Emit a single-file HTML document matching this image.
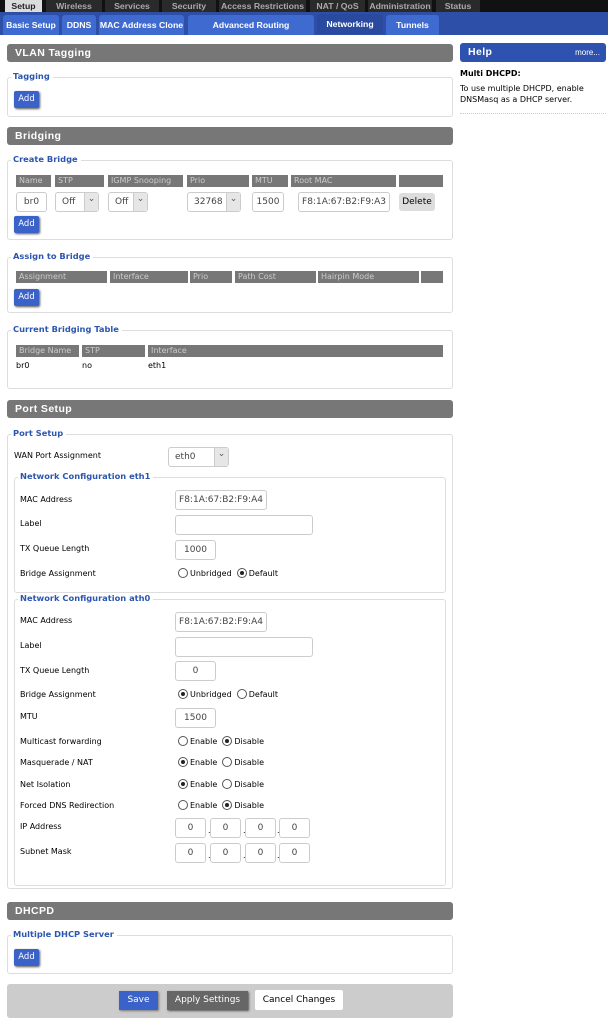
<!DOCTYPE html>
<html><head><meta charset="utf-8"><style>
*{box-sizing:border-box;margin:0;padding:0}
body{width:608px;height:1024px;background:#fff;position:relative;overflow:hidden;font-family:"DejaVu Sans","Liberation Sans",sans-serif;font-size:8px;color:#000}
.a{position:absolute}
.top{left:0;top:0;width:608px;height:12px;background:#111}
.t1{top:0;height:12px;background:#2a2a2a;color:#aaa;font-size:8.7px;font-weight:bold;text-align:center;line-height:12px;font-family:"Liberation Sans",sans-serif;overflow:hidden;white-space:nowrap}
.bar2{left:0;top:12px;width:608px;height:23px;background:#2e4fa8}
.t2{top:15px;height:20px;background:#3f6ad0;color:#fff;font-size:8.7px;font-weight:bold;text-align:center;line-height:21px;border-radius:3px 3px 0 0;font-family:"Liberation Sans",sans-serif;white-space:nowrap;overflow:hidden}
.hd{left:7px;width:446px;height:18px;background:#777;border-radius:3px;color:#fff;font-weight:bold;font-size:10.5px;line-height:18px;padding-left:8px;font-family:"Liberation Sans",sans-serif;letter-spacing:.4px}
.fs{border:1px solid #ddd;border-radius:3px}
.lg{background:#fff;color:#2d56b0;font-weight:bold;padding:0 3px 0 2px;line-height:10px;font-size:8.3px}
.add{width:25px;height:17px;background:#3a62c8;color:#fff;border-radius:2px;box-shadow:1px 1px 2px #555;text-align:center;line-height:17px;font-size:8.5px}
.th{height:12px;background:#777;color:#ccc;line-height:12px;padding-left:3px;font-size:8px}
.in{border:1px solid #ccc;border-radius:3px;background:#fff;color:#444;text-align:center;font-size:9px;height:20px;line-height:18px}
.sel{border:1px solid #ccc;border-radius:3px;background:#fff;color:#444;font-size:9px;height:20px;line-height:18px;padding-left:6px}
.sel:after{content:"⌄";position:absolute;right:0;top:0;width:13px;height:18px;background:#e6e6e6;border-left:1px solid #ccc;text-align:center;line-height:12px;font-size:9px;color:#555}
.lb{font-size:8px}
.r{display:inline-block;width:10px;height:10px;border:1px solid #555;border-radius:50%;vertical-align:-2px;margin-right:2px;position:relative;background:#fff}
.r.on:after{content:"";position:absolute;left:2px;top:2px;width:4px;height:4px;border-radius:50%;background:#222}
.rg{font-size:8px;white-space:nowrap}
</style></head><body>
<div class="a top"></div>
<div class="a t1" style="left:5px;width:37px;background:#dcdcdc;color:#222">Setup</div>
<div class="a t1" style="left:46px;width:56px">Wireless</div>
<div class="a t1" style="left:105px;width:54px">Services</div>
<div class="a t1" style="left:162px;width:54px">Security</div>
<div class="a t1" style="left:219px;width:87px">Access Restrictions</div>
<div class="a t1" style="left:310px;width:55px">NAT / QoS</div>
<div class="a t1" style="left:368px;width:64px">Administration</div>
<div class="a t1" style="left:436px;width:44px">Status</div>
<div class="a bar2"></div>
<div class="a t2" style="left:3px;width:56px">Basic Setup</div>
<div class="a t2" style="left:62px;width:34px">DDNS</div>
<div class="a t2" style="left:99px;width:85px">MAC Address Clone</div>
<div class="a t2" style="left:188px;width:126px">Advanced Routing</div>
<div class="a t2" style="left:317px;width:66px;background:#2a4aa0;top:14px">Networking</div>
<div class="a t2" style="left:386px;width:53px">Tunnels</div>

<div class="a" style="left:460px;top:43px;width:146px;height:19px;background:#2e52b0;border-radius:3px;color:#fff;font-family:'Liberation Sans',sans-serif"><b style="position:absolute;left:8px;top:3px;font-size:10.5px;letter-spacing:.4px">Help</b><span style="position:absolute;right:6px;top:5px;font-size:8px">more...</span></div>
<div class="a" style="left:460px;top:69px;font-weight:bold;font-size:8px">Multi DHCPD:</div>
<div class="a" style="left:460px;top:83px;font-size:8px;line-height:11px">To use multiple DHCPD, enable<br>DNSMasq as a DHCP server.</div>
<div class="a" style="left:460px;top:113px;width:146px;border-top:1px dotted #ccc"></div>

<div class="a hd" style="top:44px">VLAN Tagging</div>
<div class="a fs" style="left:7px;top:77px;width:446px;height:40px"></div>
<div class="a lg" style="left:11px;top:71px">Tagging</div>
<div class="a add" style="left:14px;top:91px">Add</div>

<div class="a hd" style="top:127px">Bridging</div>
<div class="a fs" style="left:7px;top:160px;width:446px;height:80px"></div>
<div class="a lg" style="left:11px;top:154px">Create Bridge</div>
<div class="a th" style="left:16px;top:175px;width:35px">Name</div>
<div class="a th" style="left:55px;top:175px;width:49px">STP</div>
<div class="a th" style="left:108px;top:175px;width:75px">IGMP Snooping</div>
<div class="a th" style="left:187px;top:175px;width:62px">Prio</div>
<div class="a th" style="left:252px;top:175px;width:36px">MTU</div>
<div class="a th" style="left:291px;top:175px;width:105px">Root MAC</div>
<div class="a th" style="left:399px;top:175px;width:44px"></div>
<div class="a in" style="left:16px;top:192px;width:31px">br0</div>
<div class="a sel" style="left:55px;top:192px;width:44px">Off</div>
<div class="a sel" style="left:108px;top:192px;width:40px">Off</div>
<div class="a sel" style="left:187px;top:192px;width:54px">32768</div>
<div class="a in" style="left:252px;top:192px;width:32px">1500</div>
<div class="a in" style="left:298px;top:192px;width:92px">F8:1A:67:B2:F9:A3</div>
<div class="a" style="left:399px;top:193px;width:36px;height:18px;background:#ddd;border-radius:3px;text-align:center;line-height:18px;font-size:9px">Delete</div>
<div class="a add" style="left:14px;top:216px">Add</div>

<div class="a fs" style="left:7px;top:257px;width:446px;height:56px"></div>
<div class="a lg" style="left:11px;top:251px">Assign to Bridge</div>
<div class="a th" style="left:16px;top:271px;width:91px">Assignment</div>
<div class="a th" style="left:110px;top:271px;width:78px">Interface</div>
<div class="a th" style="left:190px;top:271px;width:42px">Prio</div>
<div class="a th" style="left:235px;top:271px;width:81px">Path Cost</div>
<div class="a th" style="left:318px;top:271px;width:101px">Hairpin Mode</div>
<div class="a th" style="left:421px;top:271px;width:22px"></div>
<div class="a add" style="left:14px;top:289px">Add</div>

<div class="a fs" style="left:7px;top:330px;width:446px;height:59px"></div>
<div class="a lg" style="left:11px;top:324px">Current Bridging Table</div>
<div class="a th" style="left:16px;top:345px;width:63px">Bridge Name</div>
<div class="a th" style="left:82px;top:345px;width:63px">STP</div>
<div class="a th" style="left:148px;top:345px;width:295px">Interface</div>
<div class="a" style="left:16px;top:361px">br0</div>
<div class="a" style="left:82px;top:361px">no</div>
<div class="a" style="left:148px;top:361px">eth1</div>

<div class="a hd" style="top:400px">Port Setup</div>
<div class="a fs" style="left:7px;top:434px;width:446px;height:455px"></div>
<div class="a lg" style="left:11px;top:428px">Port Setup</div>
<div class="a lb" style="left:14px;top:451px">WAN Port Assignment</div>
<div class="a sel" style="left:168px;top:447px;width:61px;padding-left:6px">eth0</div>

<div class="a fs" style="left:14px;top:477px;width:432px;height:116px"></div>
<div class="a lg" style="left:18px;top:471px">Network Configuration eth1</div>
<div class="a lb" style="left:20px;top:495px">MAC Address</div>
<div class="a in" style="left:175px;top:490px;width:92px">F8:1A:67:B2:F9:A4</div>
<div class="a lb" style="left:20px;top:519px">Label</div>
<div class="a in" style="left:175px;top:515px;width:138px"></div>
<div class="a lb" style="left:20px;top:544px">TX Queue Length</div>
<div class="a in" style="left:175px;top:540px;width:41px">1000</div>
<div class="a lb" style="left:20px;top:569px">Bridge Assignment</div>
<div class="a rg" style="left:178px;top:568px"><span class="r"></span>Unbridged&nbsp;&nbsp;<span class="r on"></span>Default</div>

<div class="a fs" style="left:14px;top:599px;width:432px;height:287px"></div>
<div class="a lg" style="left:18px;top:593px">Network Configuration ath0</div>
<div class="a lb" style="left:20px;top:616px">MAC Address</div>
<div class="a in" style="left:175px;top:612px;width:92px">F8:1A:67:B2:F9:A4</div>
<div class="a lb" style="left:20px;top:641px">Label</div>
<div class="a in" style="left:175px;top:637px;width:138px"></div>
<div class="a lb" style="left:20px;top:666px">TX Queue Length</div>
<div class="a in" style="left:175px;top:661px;width:41px">0</div>
<div class="a lb" style="left:20px;top:690px">Bridge Assignment</div>
<div class="a rg" style="left:178px;top:689px"><span class="r on"></span>Unbridged&nbsp;&nbsp;<span class="r"></span>Default</div>
<div class="a lb" style="left:20px;top:712px">MTU</div>
<div class="a in" style="left:175px;top:708px;width:41px">1500</div>
<div class="a lb" style="left:20px;top:737px">Multicast forwarding</div>
<div class="a rg" style="left:178px;top:736px"><span class="r"></span>Enable&nbsp;&nbsp;<span class="r on"></span>Disable</div>
<div class="a lb" style="left:20px;top:758px">Masquerade / NAT</div>
<div class="a rg" style="left:178px;top:757px"><span class="r on"></span>Enable&nbsp;&nbsp;<span class="r"></span>Disable</div>
<div class="a lb" style="left:20px;top:780px">Net Isolation</div>
<div class="a rg" style="left:178px;top:779px"><span class="r on"></span>Enable&nbsp;&nbsp;<span class="r"></span>Disable</div>
<div class="a lb" style="left:20px;top:801px">Forced DNS Redirection</div>
<div class="a rg" style="left:178px;top:800px"><span class="r"></span>Enable&nbsp;&nbsp;<span class="r on"></span>Disable</div>
<div class="a lb" style="left:20px;top:822px">IP Address</div>
<div class="a in" style="left:175px;top:818px;width:31px">0</div><div class="a" style="left:208px;top:826px">.</div>
<div class="a in" style="left:210px;top:818px;width:31px">0</div><div class="a" style="left:243px;top:826px">.</div>
<div class="a in" style="left:245px;top:818px;width:31px">0</div><div class="a" style="left:277px;top:826px">.</div>
<div class="a in" style="left:279px;top:818px;width:31px">0</div>
<div class="a lb" style="left:20px;top:847px">Subnet Mask</div>
<div class="a in" style="left:175px;top:843px;width:31px">0</div><div class="a" style="left:208px;top:851px">.</div>
<div class="a in" style="left:210px;top:843px;width:31px">0</div><div class="a" style="left:243px;top:851px">.</div>
<div class="a in" style="left:245px;top:843px;width:31px">0</div><div class="a" style="left:277px;top:851px">.</div>
<div class="a in" style="left:279px;top:843px;width:31px">0</div>

<div class="a hd" style="top:902px">DHCPD</div>
<div class="a fs" style="left:7px;top:935px;width:446px;height:39px"></div>
<div class="a lg" style="left:11px;top:929px">Multiple DHCP Server</div>
<div class="a add" style="left:14px;top:949px">Add</div>

<div class="a" style="left:7px;top:984px;width:446px;height:34px;background:#ccc;border-radius:3px"></div>
<div class="a" style="left:119px;top:991px;width:39px;height:19px;background:#3a62c8;color:#fff;text-align:center;line-height:19px;font-size:9px;box-shadow:1px 1px 2px #777">Save</div>
<div class="a" style="left:167px;top:991px;width:81px;height:19px;background:#666;color:#fff;text-align:center;line-height:19px;font-size:9px;box-shadow:1px 1px 2px #555">Apply Settings</div>
<div class="a" style="left:255px;top:990px;width:88px;height:20px;background:#fff;color:#000;text-align:center;line-height:20px;font-size:9px;border-radius:2px">Cancel Changes</div>
</body></html>
